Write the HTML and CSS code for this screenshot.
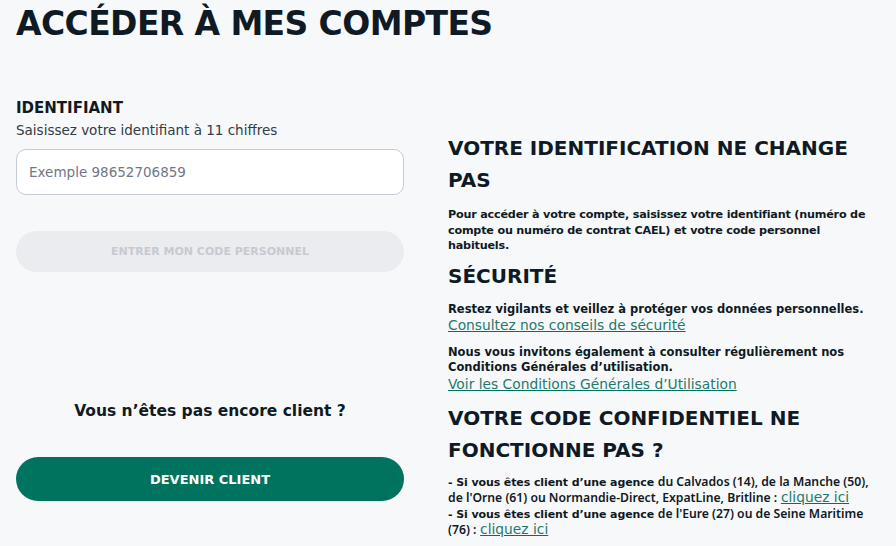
FILE: index.html
```html
<!DOCTYPE html>
<html lang="fr">
<head>
<meta charset="utf-8">
<link rel="stylesheet" href="styles.css">
</head>
<body>
<div class="page">
  <h1 class="title">ACCÉDER À MES COMPTES</h1>
  <div class="cols">
    <div class="left">
      <div class="label">IDENTIFIANT</div>
      <div class="hint">Saisissez votre identifiant à 11 chiffres</div>
      <div class="input"><span class="ph">Exemple 98652706859</span></div>
      <div class="btn-disabled">ENTRER MON CODE PERSONNEL</div>
      <div class="notclient">Vous n’êtes pas encore client ?</div>
      <div class="btn-green">DEVENIR CLIENT</div>
    </div>
    <div class="right">
      <h2 class="h2 first">VOTRE IDENTIFICATION NE CHANGE PAS</h2>
      <p class="txt p1">Pour accéder à votre compte, saisissez votre identifiant (numéro de compte ou numéro de contrat CAEL) et votre code personnel habituels.</p>
      <h2 class="h2 sec">SÉCURITÉ</h2>
      <p class="txt p2">Restez vigilants et veillez à protéger vos données personnelles.<br><a class="lnk" href="#">Consultez nos conseils de sécurité</a></p>
      <p class="txt p3">Nous vous invitons également à consulter régulièrement nos Conditions Générales d’utilisation.<br><a class="lnk" href="#">Voir les Conditions Générales d’Utilisation</a></p>
      <h2 class="h2 third">VOTRE CODE CONFIDENTIEL NE FONCTIONNE PAS ?</h2>
      <p class="txt list"><b>- Si vous êtes client d’une agence</b> <span class="med">du Calvados (14), de la Manche (50), de l'Orne (61) ou Normandie-Direct, ExpatLine, Britline :</span> <a class="lnk" href="#">cliquez ici</a><br><b>- Si vous êtes client d’une agence</b> <span class="med">de l'Eure (27) ou de Seine Maritime (76) :</span> <a class="lnk" href="#">cliquez ici</a></p>
    </div>
  </div>
</div>
</body>
</html>
```
FILE: styles.css
```css
html, body {
  margin: 0;
  padding: 0;
  background: #f7f8fa;
  color: #0f1a24;
  font-family: "DejaVu Sans", sans-serif;
}
.page {
  width: 896px;
  height: 546px;
  overflow: hidden;
  padding: 0 0 0 16px;
  box-sizing: border-box;
}
.title {
  margin: 0;
  padding-top: 4px;
  font-size: 33px;
  line-height: 40px;
  font-weight: 700;
  letter-spacing: -0.6px;
}
.cols {
  display: flex;
  gap: 44px;
}
.left {
  width: 388px;
  flex: none;
  padding-top: 55px;
  display: flex;
  flex-direction: column;
}
.label {
  font-size: 15px;
  font-weight: 700;
  line-height: 18px;
}
.hint {
  font-size: 13.5px;
  color: #333b45;
  margin-top: 4px;
  line-height: 18px;
}
.input {
  margin-top: 10px;
  height: 46px;
  box-sizing: border-box;
  border: 1px solid #c6cad6;
  border-radius: 10px;
  background: #fff;
  display: flex;
  align-items: center;
  padding-left: 12px;
}
.ph {
  font-size: 13.5px;
  color: #6f7887;
}
.btn-disabled {
  margin-top: 36px;
  height: 41px;
  border-radius: 21px;
  background: #ebecf0;
  color: #c8c9d0;
  font-size: 11px;
  font-weight: 700;
  display: flex;
  align-items: center;
  justify-content: center;
}
.notclient {
  margin-top: 128px;
  text-align: center;
  font-size: 15.5px;
  font-weight: 700;
  line-height: 22px;
}
.btn-green {
  margin-top: 35px;
  height: 44px;
  border-radius: 22px;
  background: #00735e;
  color: #fff;
  font-size: 13px;
  font-weight: 700;
  display: flex;
  align-items: center;
  justify-content: center;
}
.right {
  width: 445px;
  flex: none;
  padding-top: 88px;
}
.h2 {
  margin: 0;
  font-size: 20px;
  line-height: 32px;
  font-weight: 700;
}
.txt {
  margin: 0;
  font-size: 11.5px;
  line-height: 15.5px;
  font-weight: 700;
}
.p1 {
  margin-top: 11px;
  width: 425px;
  font-size: 11.2px;
  letter-spacing: -0.2px;
}
.sec { margin-top: 6px; }
.p2 { margin-top: 9px; line-height: 16px; }
.p3 { margin-top: 11px; }
.third { margin-top: 9px; }
.list {
  margin-top: 9px;
  width: 432px;
  font-size: 11px;
  letter-spacing: -0.1px;
  line-height: 16px;
}
.list b { font-weight: 700; }
.med {
  font-family: "Noto Sans", sans-serif;
  font-size: 12.2px;
  font-weight: 600;
  letter-spacing: 0;
  line-height: 1;
}
.list .lnk { line-height: 1; }
.lnk {
  font-family: "DejaVu Sans", sans-serif;
  color: #1f7a6c;
  font-weight: 400;
  font-size: 13.8px;
  line-height: 16px;
  letter-spacing: 0;
  text-decoration: underline;
  text-decoration-color: #00735e;
}
```
